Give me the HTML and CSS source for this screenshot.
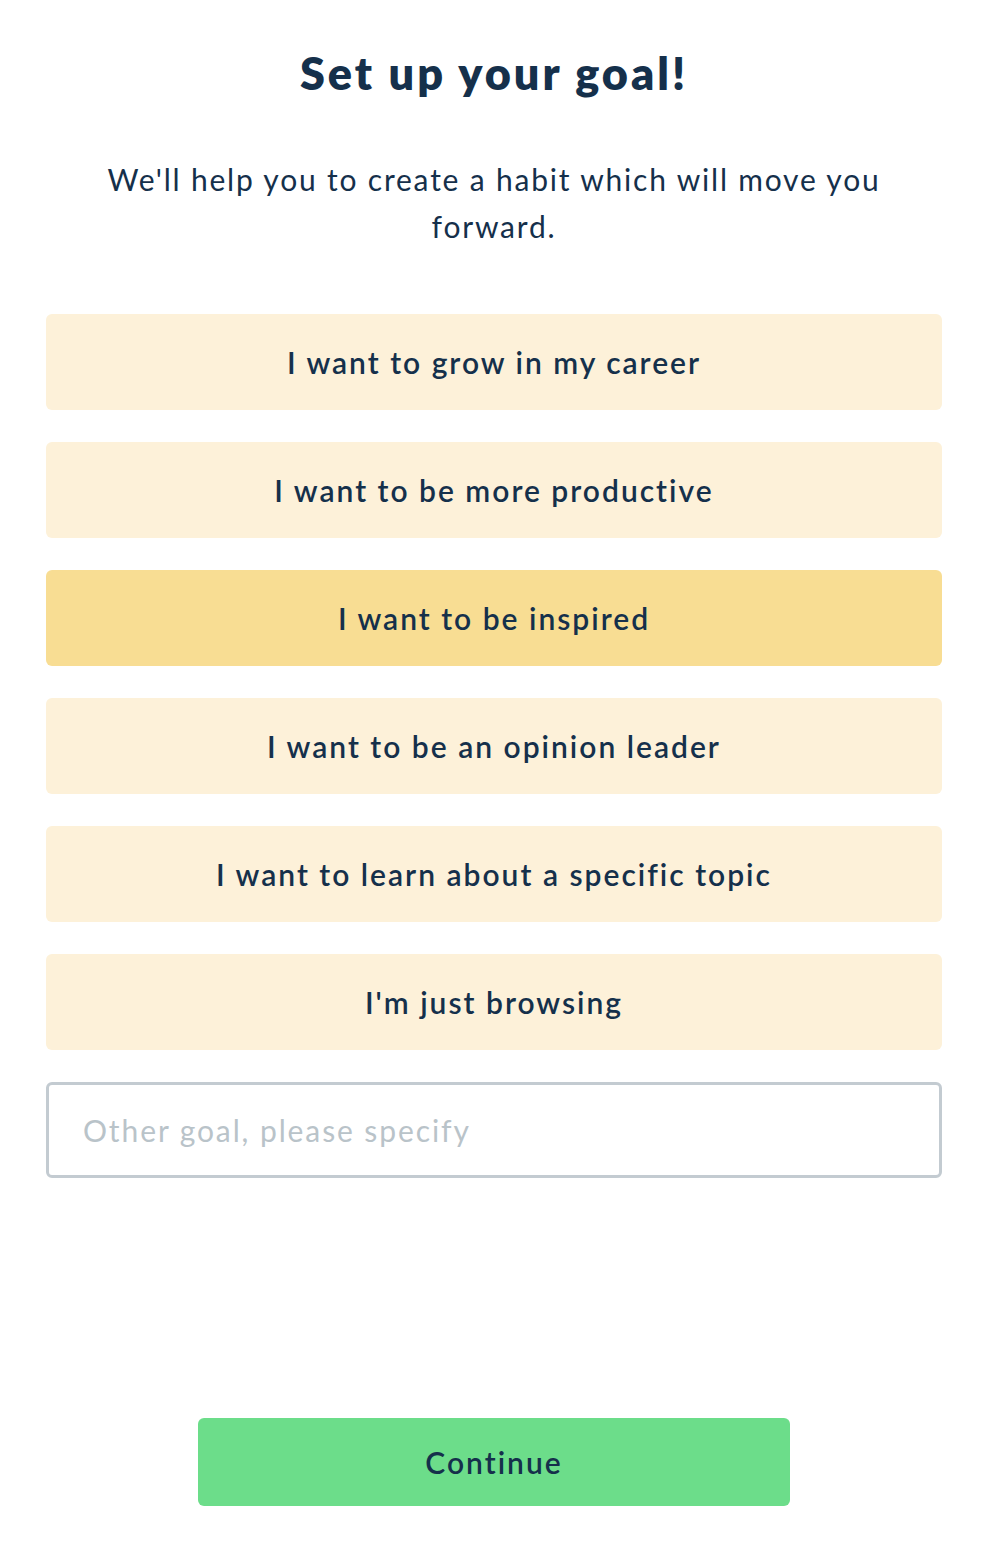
FILE: index.html
```html
<!DOCTYPE html>
<html lang="en">
<head>
<meta charset="utf-8">
<title>Set up your goal!</title>
<link rel="stylesheet" href="styles.css">
</head>
<body>
<main class="page">
  <h1 class="title">Set up your goal!</h1>
  <p class="subtitle">We'll help you to create a habit which will move you forward.</p>
  <div class="options">
    <button class="option">I want to grow in my career</button>
    <button class="option">I want to be more productive</button>
    <button class="option option--selected">I want to be inspired</button>
    <button class="option">I want to be an opinion leader</button>
    <button class="option">I want to learn about a specific topic</button>
    <button class="option">I'm just browsing</button>
    <input class="other" type="text" placeholder="Other goal, please specify">
  </div>
  <div class="actions">
    <button class="continue">Continue</button>
  </div>
</main>
</body>
</html>
```

FILE: styles.css
```css
html, body {
  margin: 0;
  padding: 0;
  background: #ffffff;
}

body {
  font-family: "Lato", "Open Sans", sans-serif;
  color: #15304b;
}

.page {
  padding: 0 52px 0 46px;
  display: flex;
  flex-direction: column;
}

.title {
  margin: 43px 0 0;
  font-size: 45px;
  line-height: 60px;
  font-weight: 800;
  text-align: center;
  letter-spacing: 3px;
}

.subtitle {
  margin: 53px 20px 0;
  font-size: 30px;
  line-height: 47px;
  font-weight: 400;
  text-align: center;
  letter-spacing: 1.8px;
}

.options {
  margin-top: 64px;
  display: flex;
  flex-direction: column;
  gap: 32px;
}

.option {
  height: 96px;
  border: none;
  border-radius: 6px;
  background: #fdf1d9;
  color: #15304b;
  font-family: inherit;
  font-size: 30px;
  font-weight: 600;
  letter-spacing: 2px;
  text-align: center;
  padding: 0;
}

.option--selected {
  background: #f8dd93;
}

.other {
  box-sizing: border-box;
  height: 96px;
  border: 3px solid #c3cbd1;
  border-radius: 6px;
  padding: 0 34px;
  font-family: inherit;
  font-size: 30px;
  color: #15304b;
  letter-spacing: 1.9px;
  outline: none;
}

.other::placeholder {
  color: #b9c3c9;
}

.actions {
  margin-top: 240px;
  display: flex;
  justify-content: center;
}

.continue {
  width: 592px;
  height: 88px;
  border: none;
  border-radius: 6px;
  background: #6cdd8a;
  color: #15304b;
  font-family: inherit;
  font-size: 30px;
  font-weight: 600;
  letter-spacing: 2px;
  padding: 0;
}
```
